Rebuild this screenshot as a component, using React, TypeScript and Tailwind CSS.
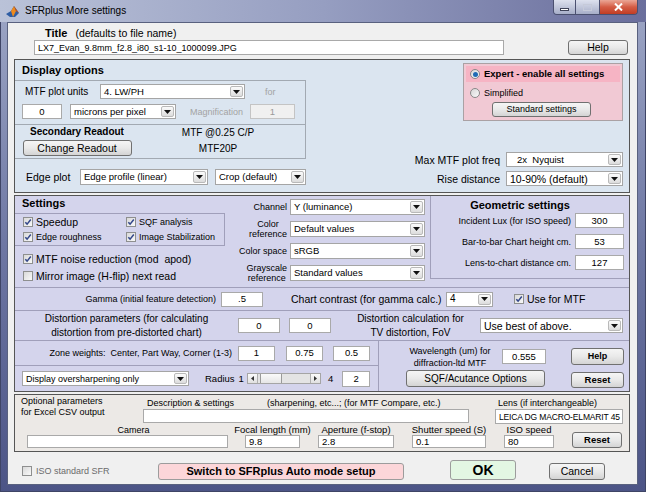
import React from "react";

type Tone = "plain" | "pink" | "green";

const tones: Record<Tone, string> = {
  plain: "bg-linear-to-b from-[#f5f5f5] via-[#e9e9e9] to-[#d4d4d4] border-[#707070]",
  pink: "bg-[#fcd6d9] border-[#9c9c9c]",
  green: "bg-[#e3f7e3] border-[#9c9c9c]",
};

const Btn = ({
  children,
  className = "",
  textClass = "text-[10px]",
  tone = "plain",
}: {
  children: React.ReactNode;
  className?: string;
  textClass?: string;
  tone?: Tone;
}) => (
  <button
    type="button"
    className={`flex items-center justify-center border rounded-[3px] text-black leading-none whitespace-nowrap ${tones[tone]} ${textClass} ${className}`}
  >
    {children}
  </button>
);

const Select = ({
  value,
  className = "",
  textClass = "text-[9.5px] pl-[3px]",
}: {
  value: string;
  className?: string;
  textClass?: string;
}) => (
  <div className={`flex bg-white border border-[#a5a5a5] ${className}`}>
    <span className={`flex-1 min-w-0 flex items-center whitespace-pre overflow-hidden ${textClass}`}>{value}</span>
    <span className="w-[13px] m-px flex items-center justify-center border border-[#b9b9b9] rounded-[2px] bg-linear-to-b from-[#fbfbfb] to-[#dcdcdc]">
      <svg width="7" height="4" viewBox="0 0 7 4">
        <path d="M0 0H7L3.5 4Z" fill="#111" />
      </svg>
    </span>
  </div>
);

const Field = ({
  value = "",
  className = "",
  left = false,
  disabled = false,
  textClass = "text-[9.5px]",
}: {
  value?: string;
  className?: string;
  left?: boolean;
  disabled?: boolean;
  textClass?: string;
}) => (
  <div
    className={`flex items-center overflow-hidden whitespace-nowrap border ${
      disabled ? "bg-[#f0f0f0] border-[#c4c4c4] text-[#9a9a9a]" : "bg-white border-[#a9a9a9]"
    } ${left ? "justify-start pl-[3px]" : "justify-center"} ${textClass} ${className}`}
  >
    {value}
  </div>
);

const Check = ({ on = false }: { on?: boolean }) => (
  <span className="w-[10px] h-[10px] shrink-0 border border-[#8e8f8f] bg-linear-to-br from-[#d9d9d9] to-[#f9f9f9] flex items-center justify-center">
    {on && (
      <svg width="8" height="8" viewBox="0 0 8 8">
        <path d="M1.3 4.2L3.1 6.1L6.8 1.5" stroke="#33478a" strokeWidth="1.5" fill="none" />
      </svg>
    )}
  </span>
);

const Radio = ({ on = false }: { on?: boolean }) => (
  <span className="w-[10px] h-[10px] shrink-0 rounded-full border border-[#888] bg-linear-to-br from-[#d6d6d6] to-[#fafafa] flex items-center justify-center">
    {on && <span className="w-[5px] h-[5px] rounded-full bg-[#1f6bb5]" />}
  </span>
);

const Slider = () => (
  <div className="ml-[3px] w-[74px] h-[11px] flex border border-[#a5a5a5] bg-[#e4e4e4]">
    <span className="w-[10px] flex items-center justify-center bg-linear-to-b from-[#fbfbfb] to-[#e0e0e0] border-r border-[#b0b0b0]">
      <svg width="3" height="5" viewBox="0 0 3 5">
        <path d="M3 0V5L0 2.5Z" fill="#333" />
      </svg>
    </span>
    <span className="w-[2px]" />
    <span className="w-[22px] border-x border-[#9a9a9a] bg-linear-to-b from-[#fafafa] to-[#e6e6e6]" />
    <span className="flex-1" />
    <span className="w-[10px] flex items-center justify-center bg-linear-to-b from-[#fbfbfb] to-[#e0e0e0] border-l border-[#b0b0b0]">
      <svg width="3" height="5" viewBox="0 0 3 5">
        <path d="M0 0V5L3 2.5Z" fill="#333" />
      </svg>
    </span>
  </div>
);

const AppIcon = () => (
  <svg width="13" height="13" viewBox="0 0 13 13">
    <path d="M0 9L5 6L8 1L13 8L9 12L4 12Z" fill="#2f5da3" />
    <path d="M5 6L8 1L10 6L7 12Z" fill="#f08a1c" />
    <path d="M8 1L13 8L10 6Z" fill="#c2521b" />
  </svg>
);

const Labeled = ({
  label,
  value = "",
  className = "",
  labelClass = "text-[9px]",
}: {
  label: string;
  value?: string;
  className?: string;
  labelClass?: string;
}) => (
  <div className={`flex flex-col ${className}`}>
    <div className={`h-[11px] flex items-center justify-center whitespace-nowrap ${labelClass}`}>{label}</div>
    <Field value={value} left className="h-[13px]" />
  </div>
);

export default function App() {
  return (
    <div className="w-[646px] h-[492px] overflow-hidden bg-linear-to-b from-[#9ea7c6] via-[#6e77a3] to-[#4c5486] shadow-[inset_0_0_0_1px_#3f4566] font-['Liberation_Sans',Arial,sans-serif] text-black leading-[12px] select-none">
      {/* title bar */}
      <div className="h-[22px] flex bg-linear-to-r from-[#bac2d8] via-[#969ec1] to-[#6a6e9c]">
        <div className="flex items-center pl-[6px] gap-[6px]">
          <AppIcon />
          <span className="text-[10px]">SFRplus More settings</span>
        </div>
        <div className="ml-auto mr-[8px] flex h-[15px] rounded-b-[4px] overflow-hidden border border-t-0 border-[#4b5070]">
          <div className="w-[22px] flex items-center justify-center bg-linear-to-b from-[#dde1ee] to-[#a7aec8] border-r border-[#4b5070]">
            <span className="w-[9px] h-[3px] mt-[5px] bg-white border border-[#3e4258]" />
          </div>
          <div className="w-[24px] flex items-center justify-center bg-linear-to-b from-[#dde1ee] to-[#a7aec8] border-r border-[#4b5070]">
            <span className="w-[9px] h-[7px] border border-[#c6cad9]" />
          </div>
          <div className="w-[37px] flex items-center justify-center bg-linear-to-b from-[#eaa696] via-[#d45c45] to-[#c13c22]">
            <svg width="9" height="8" viewBox="0 0 9 8">
              <path d="M1 0.5L8 7.5M8 0.5L1 7.5" stroke="#fff" strokeWidth="2" />
            </svg>
          </div>
        </div>
      </div>

      {/* client area */}
      <div className="ml-[7px] w-[631px] h-[463px] bg-[#f0f0f0] border border-[#59617f]">
        <div className="h-[17px] flex items-baseline gap-[8px] pl-[37px] pt-[4px]">
          <span className="text-[11px] font-bold">Title</span>
          <span className="text-[10.5px]">(defaults to file name)</span>
        </div>
        <div className="flex h-[15px]">
          <Field value="LX7_Evan_9.8mm_f2.8_i80_s1-10_1000099.JPG" left textClass="text-[9px]" className="ml-[26px] w-[470px] h-[15px]" />
          <Btn className="ml-[64px] w-[60px] h-[15px]" textClass="text-[10.5px]">
            Help
          </Btn>
        </div>

        {/* Display options */}
        <div className="ml-[6px] mt-[4px] w-[616px] h-[134px] flex bg-[#dbe5f0] border border-[#555]">
          <div className="w-[291px] flex flex-col">
            <div className="h-[20px] flex items-center pl-[7px] text-[11px] font-bold">Display options</div>
            <div className="h-[44px] border-t border-r border-[#a2a9b2] pt-[3px]">
              <div className="h-[15px] flex items-center">
                <span className="w-[85px] pl-[10px] text-[10px]">MTF plot units</span>
                <Select value="4. LW/PH" className="w-[145px] h-[15px]" />
                <span className="ml-[20px] text-[9px] text-[#a3a3a3]">for</span>
              </div>
              <div className="h-[15px] mt-[5px] flex items-center pl-[7px]">
                <Field value="0" className="w-[40px] h-[15px]" />
                <Select value="microns per pixel" className="ml-[8px] w-[106px] h-[15px]" />
                <span className="ml-[14px] w-[60px] text-[9px] text-[#a3a3a3]">Magnification</span>
                <Field value="1" disabled className="w-[45px] h-[15px]" />
              </div>
            </div>
            <div className="h-[35px] flex border-t border-r border-b border-[#a2a9b2]">
              <div className="w-[124px] flex flex-col items-center">
                <span className="mt-px text-[10px] font-bold">Secondary Readout</span>
                <Btn className="mt-[2px] w-[109px] h-[16px]" textClass="text-[10.5px]">
                  Change Readout
                </Btn>
              </div>
              <div className="w-[158px] flex flex-col items-center text-[10px] leading-[16px]">
                <span>MTF @0.25 C/P</span>
                <span>MTF20P</span>
              </div>
            </div>
            <div className="pt-[10px] flex items-center">
              <span className="w-[65px] pl-[11px] text-[10.5px]">Edge plot</span>
              <Select value="Edge profile (linear)" className="w-[128px] h-[16px]" />
              <Select value="Crop (default)" className="ml-[7px] w-[91px] h-[16px]" />
            </div>
          </div>

          <div className="flex-1 flex flex-col">
            <div className="ml-[157px] mt-[3px] w-[160px] h-[58px] bg-[#f1c9d4] border border-[#aaa1a4] px-[2px] pt-[2px]">
              <div className="h-[16px] flex items-center pl-[4px] bg-[#f6b4c4]">
                <Radio on />
                <span className="ml-[4px] text-[9.5px] font-bold">Expert - enable all settings</span>
              </div>
              <div className="h-[16px] mt-[3px] flex items-center pl-[4px]">
                <Radio />
                <span className="ml-[4px] text-[9px]">Simplified</span>
              </div>
              <Btn className="ml-[26px] mt-px w-[99px] h-[15px]" textClass="text-[9px]">
                Standard settings
              </Btn>
            </div>
            <div className="mt-[31px] h-[15px] flex items-center justify-end pr-[6px]">
              <span className="mr-[6px] text-[10.5px]">Max MTF plot freq</span>
              <Select value="2x  Nyquist" className="w-[117px] h-[15px]" textClass="text-[9.5px] pl-[10px]" />
            </div>
            <div className="mt-[4px] h-[15px] flex items-center justify-end pr-[6px]">
              <span className="mr-[6px] text-[10.5px]">Rise distance</span>
              <Select value="10-90% (default)" className="w-[117px] h-[15px]" textClass="text-[10.5px] pl-[3px]" />
            </div>
          </div>
        </div>

        {/* Settings */}
        <div className="ml-[6px] mt-[2px] w-[616px] h-[197px] flex flex-col bg-[#d4d4ec] border border-[#555]">
          <div className="h-[91px] flex">
            <div className="w-[210px] flex flex-col">
              <div className="h-[17px] pl-[7px] pt-px text-[11px] font-bold leading-[13px]">Settings</div>
              <div className="h-[33px] flex flex-col pl-[8px] border-t border-r border-b border-[#a09fba]">
                <div className="h-[16px] flex items-center">
                  <span className="w-[103px] flex items-center">
                    <Check on />
                    <span className="ml-[3px] text-[10.5px]">Speedup</span>
                  </span>
                  <Check on />
                  <span className="ml-[3px] text-[9px]">SQF analysis</span>
                </div>
                <div className="h-[16px] flex items-center">
                  <span className="w-[103px] flex items-center">
                    <Check on />
                    <span className="ml-[3px] text-[9px]">Edge roughness</span>
                  </span>
                  <Check on />
                  <span className="ml-[3px] text-[9px]">Image Stabilization</span>
                </div>
              </div>
              <div className="mt-[4px] h-[17px] flex items-center pl-[8px]">
                <Check on />
                <span className="ml-[3px] text-[10.5px]">MTF noise reduction (mod&nbsp; apod)</span>
              </div>
              <div className="h-[17px] flex items-center pl-[8px]">
                <Check />
                <span className="ml-[3px] text-[10.5px]">Mirror image (H-flip) next read</span>
              </div>
            </div>

            <div className="w-[205px] flex flex-col gap-[6px] pt-[3px]">
              <div className="h-[16px] flex items-center">
                <span className="w-[62px] flex justify-end text-[9px]">Channel</span>
                <Select value="Y (luminance)" className="ml-[3px] w-[135px] h-[16px]" />
              </div>
              <div className="h-[16px] flex items-center">
                <span className="w-[62px] flex justify-end">
                  <span className="text-center text-[9px] leading-[10px]">
                    Color
                    <br />
                    reference
                  </span>
                </span>
                <Select value="Default values" className="ml-[3px] w-[135px] h-[16px]" />
              </div>
              <div className="h-[16px] flex items-center">
                <span className="w-[62px] flex justify-end text-[9px]">Color space</span>
                <Select value="sRGB" className="ml-[3px] w-[135px] h-[16px]" />
              </div>
              <div className="h-[16px] flex items-center">
                <span className="w-[62px] flex justify-end">
                  <span className="text-center text-[9px] leading-[10px]">
                    Grayscale
                    <br />
                    reference
                  </span>
                </span>
                <Select value="Standard values" className="ml-[3px] w-[135px] h-[16px]" />
              </div>
            </div>

            <div className="flex-1 h-[83px] flex flex-col border-l border-b border-[#a09fba]">
              <div className="h-[17px] flex items-center justify-center pr-[20px] text-[11px] font-bold">Geometric settings</div>
              <div className="flex flex-col gap-[6px]">
                <div className="h-[15px] flex items-center justify-end pr-[5px]">
                  <span className="mr-[4px] text-[9px]">Incident Lux (for ISO speed)</span>
                  <Field value="300" className="w-[49px] h-[15px]" />
                </div>
                <div className="h-[15px] flex items-center justify-end pr-[5px]">
                  <span className="mr-[4px] text-[9px]">Bar-to-bar Chart height cm.</span>
                  <Field value="53" className="w-[49px] h-[15px]" />
                </div>
                <div className="h-[15px] flex items-center justify-end pr-[5px]">
                  <span className="mr-[4px] text-[9px]">Lens-to-chart distance cm.</span>
                  <Field value="127" className="w-[49px] h-[15px]" />
                </div>
              </div>
            </div>
          </div>

          <div className="h-[23px] flex items-center border-t border-[#a09fba]">
            <span className="w-[201px] text-right text-[9px]">Gamma (initial feature detection)</span>
            <Field value=".5" className="ml-[5px] w-[42px] h-[15px]" />
            <span className="ml-[28px] w-[155px] text-[10.5px]">Chart contrast (for gamma calc.)</span>
            <Select value="4" className="w-[47px] h-[15px]" textClass="text-[10px] pl-[3px]" />
            <span className="ml-[21px] flex">
              <Check on />
            </span>
            <span className="ml-[3px] text-[10.5px]">Use for MTF</span>
          </div>

          <div className="h-[30px] flex items-center border-t border-[#a09fba]">
            <span className="w-[223px] text-center text-[10px] leading-[14px]">
              Distortion parameters (for calculating
              <br />
              distortion from pre-distorted chart)
            </span>
            <Field value="0" className="w-[42px] h-[15px]" />
            <Field value="0" className="ml-[9px] w-[42px] h-[15px]" />
            <span className="ml-[10px] w-[139px] text-center text-[10px] leading-[14px]">
              Distortion calculation for
              <br />
              TV distortion, FoV
            </span>
            <Select value="Use best of above." className="w-[143px] h-[15px]" textClass="text-[10.5px] pl-[3px]" />
          </div>

          <div className="flex-1 flex border-t border-[#a09fba]">
            <div className="w-[363px] flex flex-col">
              <div className="h-[24px] flex items-center">
                <span className="w-[217px] text-right text-[9px] whitespace-pre">Zone weights:  Center, Part Way, Corner (1-3)</span>
                <Field value="1" className="ml-[6px] w-[37px] h-[15px]" />
                <Field value="0.75" className="ml-[11px] w-[37px] h-[15px]" />
                <Field value="0.5" className="ml-[10px] w-[37px] h-[15px]" />
              </div>
              <div className="flex-1 flex items-center border-t border-[#a09fba]">
                <Select value="Display oversharpening only" className="ml-[7px] w-[167px] h-[15px]" textClass="text-[9px] pl-[3px]" />
                <span className="ml-[16px] text-[9.5px]">Radius</span>
                <span className="ml-[4px] text-[9.5px]">1</span>
                <Slider />
                <span className="ml-[7px] text-[9.5px]">4</span>
                <Field value="2" className="ml-[9px] w-[28px] h-[16px]" />
              </div>
            </div>
            <div className="flex-1 flex flex-col pt-[7px] border-l border-[#a09fba]">
              <div className="h-[17px] flex items-center">
                <span className="ml-[21px] w-[100px] text-center text-[9px] leading-[12px]">
                  Wavelength (um) for
                  <br />
                  diffraction-ltd MTF
                </span>
                <Field value="0.555" className="ml-[2px] w-[44px] h-[15px]" />
                <Btn className="ml-[25px] w-[53px] h-[17px]" textClass="text-[9px] font-bold">
                  Help
                </Btn>
              </div>
              <div className="mt-[5px] flex items-start">
                <Btn className="ml-[27px] w-[139px] h-[17px]" textClass="text-[10px]">
                  SQF/Acutance Options
                </Btn>
                <Btn className="ml-[26px] mt-[2px] w-[53px] h-[16px]" textClass="text-[9.5px] font-bold">
                  Reset
                </Btn>
              </div>
            </div>
          </div>
        </div>

        {/* Optional parameters */}
        <div className="ml-[6px] mt-[2px] w-[616px] h-[58px] flex flex-col bg-[#ece9e6] border border-[#555]">
          <div className="flex pt-px">
            <div className="w-[128px] pl-[6px] text-[9px] leading-[11px]">
              Optional parameters
              <br />
              for Excel CSV output
            </div>
            <div className="w-[326px] flex flex-col">
              <div className="h-[13px] flex items-center text-[9px] whitespace-nowrap">
                <span className="ml-[4px]">Description &amp; settings</span>
                <span className="ml-[33px]">(sharpening, etc...; (for MTF Compare, etc.)</span>
              </div>
              <Field className="h-[14px]" />
            </div>
            <div className="ml-[26px] w-[128px] flex flex-col">
              <div className="h-[13px] flex items-center pl-[3px] text-[9px]">Lens (if interchangeable)</div>
              <Field value="LEICA DG MACRO-ELMARIT 45" left className="h-[15px]" textClass="text-[8.5px] tracking-[-0.15px]" />
            </div>
          </div>
          <div className="flex items-start">
            <div className="ml-[12px] w-[201px] flex flex-col">
              <div className="h-[11px] flex items-center justify-center pl-[12px] text-[9px]">Camera</div>
              <Field className="h-[13px]" />
            </div>
            <Labeled label="Focal length (mm)" value="9.8" labelClass="text-[9.5px]" className="ml-[17px] w-[55px]" />
            <Labeled label="Aperture (f-stop)" value="2.8" labelClass="text-[9.5px]" className="ml-[18px] w-[76px]" />
            <Labeled label="Shutter speed (S)" value="0.1" labelClass="text-[9.5px]" className="ml-[18px] w-[74px]" />
            <Labeled label="ISO speed" value="80" labelClass="text-[9.5px]" className="ml-[18px] w-[50px]" />
            <Btn className="ml-[18px] mt-[8px] w-[50px] h-[16px]" textClass="text-[9.5px] font-bold">
              Reset
            </Btn>
          </div>
        </div>

        {/* bottom row */}
        <div className="flex items-start pt-[8px]">
          <div className="ml-[14px] mt-[5px] w-[136px] h-[12px] flex items-center">
            <Check />
            <span className="ml-[4px] text-[9px] text-[#6b6b6b]">ISO standard SFR</span>
          </div>
          <Btn tone="pink" className="mt-[3px] w-[246px] h-[17px]" textClass="text-[11px] font-bold">
            Switch to SFRplus Auto mode setup
          </Btn>
          <Btn tone="green" className="ml-[46px] w-[66px] h-[20px]" textClass="text-[14px] font-bold text-[#0d6a12]">
            OK
          </Btn>
          <Btn className="ml-[33px] mt-[3px] w-[56px] h-[17px]" textClass="text-[10.5px]">
            Cancel
          </Btn>
        </div>
      </div>
    </div>
  );
}
